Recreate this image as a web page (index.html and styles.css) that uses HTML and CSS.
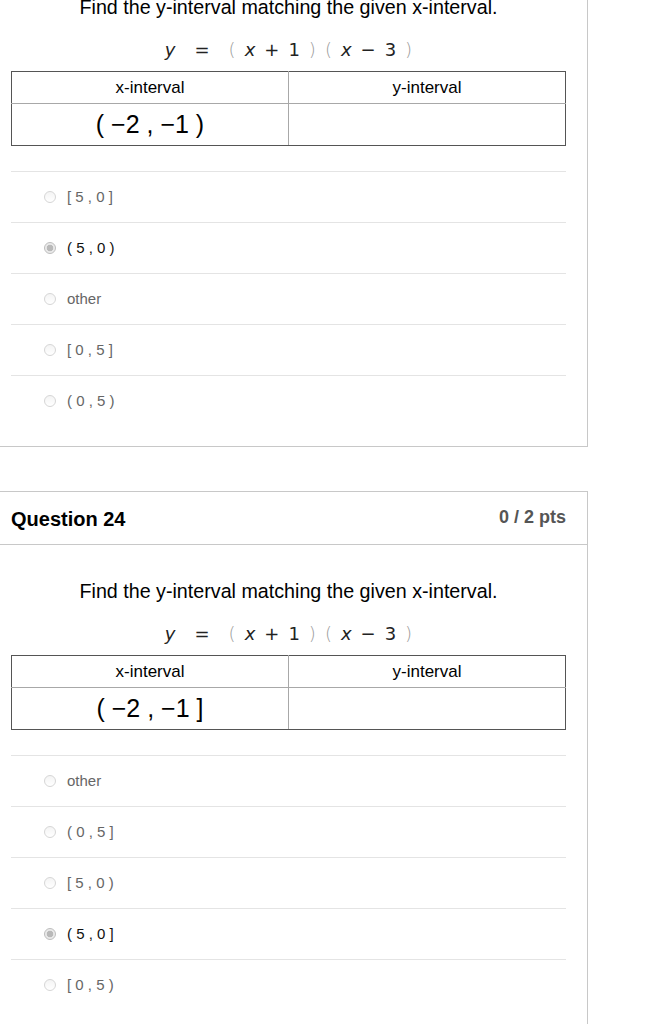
FILE: index.html
```html
<!DOCTYPE html>
<html lang="en">
<head>
<meta charset="utf-8">
<title>Quiz</title>
<link rel="stylesheet" href="styles.css">
</head>
<body>
<div class="quiz">
  <section class="card card-first">
    <div class="card-body">
      <p class="prompt">Find the y-interval matching the given x-interval.</p>
      <div class="eq">
        <span class="v">y</span><span class="op eqsign">=</span><span class="par">(</span><span class="v">x</span><span class="op">+</span><span class="n">1</span><span class="par">)</span><span class="par">(</span><span class="v">x</span><span class="op">−</span><span class="n">3</span><span class="par">)</span>
      </div>
      <table class="itable">
        <tr><th>x-interval</th><th>y-interval</th></tr>
        <tr><td class="xval">( −2 , −1 )</td><td></td></tr>
      </table>
      <ul class="opts">
        <li class="opt"><span class="radio"></span><span class="otext">[ 5 , 0 ]</span></li>
        <li class="opt sel"><span class="radio on"></span><span class="otext">( 5 , 0 )</span></li>
        <li class="opt"><span class="radio"></span><span class="otext">other</span></li>
        <li class="opt"><span class="radio"></span><span class="otext">[ 0 , 5 ]</span></li>
        <li class="opt"><span class="radio"></span><span class="otext">( 0 , 5 )</span></li>
      </ul>
    </div>
  </section>

  <section class="card">
    <header class="card-head">
      <h2 class="qtitle">Question 24</h2>
      <span class="pts">0 / 2 pts</span>
    </header>
    <div class="card-body">
      <p class="prompt">Find the y-interval matching the given x-interval.</p>
      <div class="eq">
        <span class="v">y</span><span class="op eqsign">=</span><span class="par">(</span><span class="v">x</span><span class="op">+</span><span class="n">1</span><span class="par">)</span><span class="par">(</span><span class="v">x</span><span class="op">−</span><span class="n">3</span><span class="par">)</span>
      </div>
      <table class="itable">
        <tr><th>x-interval</th><th>y-interval</th></tr>
        <tr><td class="xval">( −2 , −1 ]</td><td></td></tr>
      </table>
      <ul class="opts">
        <li class="opt"><span class="radio"></span><span class="otext">other</span></li>
        <li class="opt"><span class="radio"></span><span class="otext">( 0 , 5 ]</span></li>
        <li class="opt"><span class="radio"></span><span class="otext">[ 5 , 0 )</span></li>
        <li class="opt sel"><span class="radio on"></span><span class="otext">( 5 , 0 ]</span></li>
        <li class="opt"><span class="radio"></span><span class="otext">[ 0 , 5 )</span></li>
      </ul>
    </div>
  </section>
</div>
</body>
</html>
```
FILE: styles.css
```css
html, body {
  margin: 0;
  padding: 0;
  background: #fff;
}
body {
  font-family: "Liberation Sans", Arial, sans-serif;
  color: #000;
  overflow: hidden;
}
.quiz {
  width: 588px;
}
.card {
  border: 1px solid #c8c8c8;
  border-left: none;
  margin-top: 44px;
}
.card-first {
  margin-top: -39px;
  border-top: none;
}
.card-head {
  height: 52px;
  border-bottom: 1px solid #c8c8c8;
  display: flex;
  align-items: center;
  justify-content: space-between;
  padding: 0 21px 0 11px;
}
.qtitle {
  margin: 0;
  font-size: 20px;
  font-weight: bold;
  color: #000;
  padding-top: 3px;
}
.pts {
  font-size: 18px;
  font-weight: bold;
  color: #555;
  margin-bottom: 2px;
}
.card-body {
  padding: 34px 21px 20px 11px;
}
.prompt {
  margin: 0;
  font-size: 19.7px;
  line-height: 24px;
  text-align: center;
}
.eq {
  margin-top: 19px;
  height: 24px;
  line-height: 24px;
  display: flex;
  justify-content: center;
  gap: 9px;
  font-family: "DejaVu Sans", sans-serif;
  font-size: 18px;
  color: #222;
}
.eq .v {
  font-style: italic;
}
.eq .eqsign {
  margin: 0 10px;
}
.eq .par {
  color: #9a9a9a;
  font-weight: 300;
}
.itable {
  margin-top: 9px;
  width: 555px;
  border-collapse: collapse;
  border: 1px solid #555;
  table-layout: fixed;
}
.itable th, .itable td {
  border: 1px solid #a8a8a8;
  text-align: center;
  padding: 0;
}
.itable tr:first-child th {
  border-top: 1px solid #555;
}
.itable th:first-child, .itable td:first-child {
  border-left: 1px solid #555;
}
.itable th:last-child, .itable td:last-child {
  border-right: 1px solid #555;
}
.itable tr:last-child td {
  border-bottom: 1px solid #555;
}
.itable th {
  height: 31px;
  font-weight: normal;
  font-size: 17px;
}
.itable td {
  height: 41px;
  font-size: 25px;
}
.opts {
  list-style: none;
  margin: 25px 0 0 0;
  padding: 0;
}
.opt {
  border-top: 1px solid #e4e4e4;
  height: 50px;
  display: flex;
  align-items: center;
  padding-left: 33px;
  gap: 11px;
}
.radio {
  width: 12px;
  height: 12px;
  box-sizing: border-box;
  border-radius: 50%;
  border: 1px solid #d6d6d6;
  background: linear-gradient(#f4f4f4, #fff);
  flex: none;
}
.radio.on {
  border-color: #bdbdbd;
  background: radial-gradient(circle, #b9b9b9 0, #b9b9b9 3px, #e8e8e8 3.6px, #f2f2f2 100%);
}
.otext {
  font-size: 15px;
  color: #666;
  line-height: 20px;
}
.sel .otext {
  color: #111;
}
```
